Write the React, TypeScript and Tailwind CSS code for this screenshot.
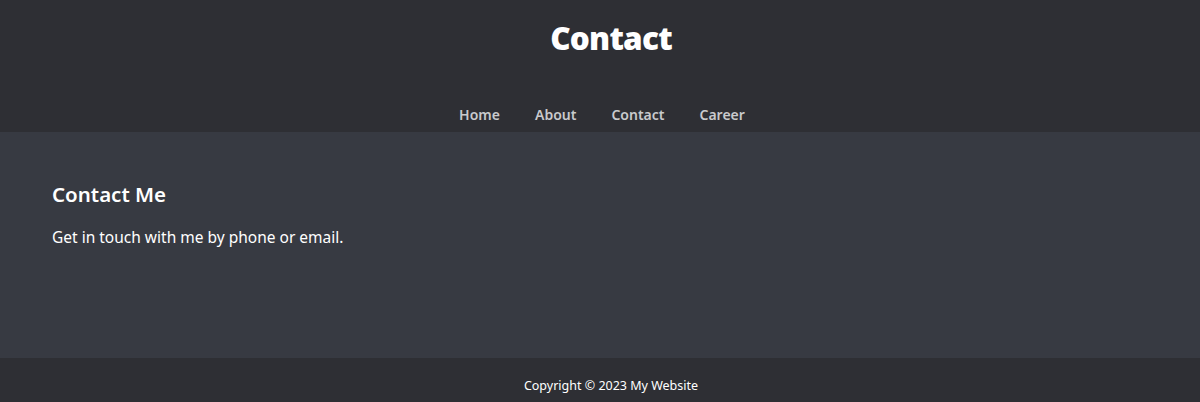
import React from 'react';

const navLinks = ['Home', 'About', 'Contact', 'Career'];

const App: React.FC = () => {
  return (
    <div className="min-h-screen flex flex-col bg-[#373a42] text-white font-['Noto_Sans',sans-serif]">
      {/* Header */}
      <header className="bg-[#2e2f34] h-[132px] flex flex-col items-center">
        <h1 className="mt-[14px] pl-[22px] text-[31.5px] leading-[48px] font-black tracking-tight">Contact</h1>
        <nav className="mt-auto mb-[5px] flex gap-[35px] pl-[4px]">
          {navLinks.map((link) => (
            <a key={link} href="#" className="text-[14px] leading-[24px] font-semibold text-[#c9cacd]">
              {link}
            </a>
          ))}
        </nav>
      </header>

      {/* Main */}
      <main className="h-[226px] px-[52px] pt-[46px]">
        <h2 className="text-[20.5px] leading-[32px] font-semibold">Contact Me</h2>
        <p className="mt-[15px] text-[15.5px] leading-[24px]">Get in touch with me by phone or email.</p>
      </main>

      {/* Footer */}
      <footer className="bg-[#2e2f34] h-[44px] flex items-center justify-center pt-[12px] pl-[22px]">
        <p className="text-[12.5px] leading-[20px]">Copyright © 2023 My Website</p>
      </footer>
    </div>
  );
};

export default App;
